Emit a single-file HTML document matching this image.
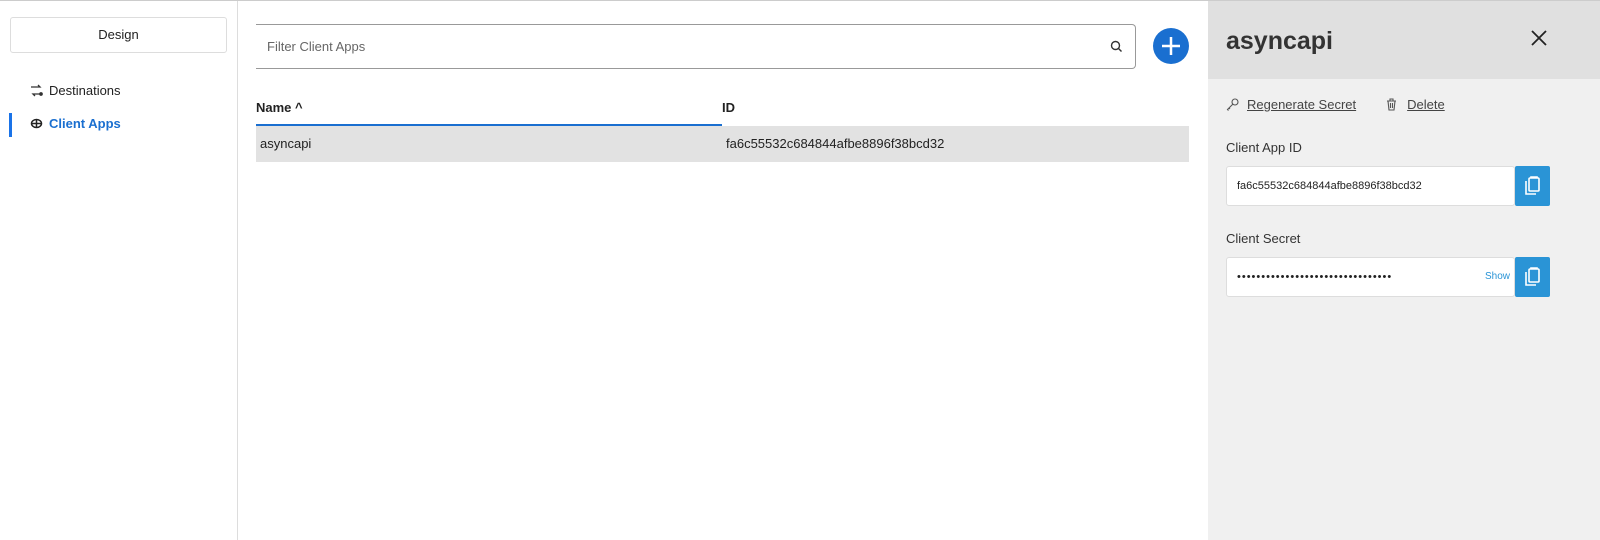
<!DOCTYPE html>
<html><head><style>
*{box-sizing:border-box;margin:0;padding:0}
body{width:1600px;height:540px;overflow:hidden;font-family:"Liberation Sans",sans-serif;background:#fff;position:relative;color:#222}
.top{position:absolute;left:0;top:0;width:1600px;height:1px;background:#ccc}
.side{position:absolute;left:0;top:1px;width:238px;height:539px;border-right:1px solid #ddd}
.design{position:absolute;left:10px;top:16px;width:217px;height:36px;border:1px solid #ddd;border-radius:3px;font-size:13px;text-align:center;line-height:34px}
.nav{position:absolute;left:30px;font-size:13px;display:flex;align-items:center;gap:6px}
.bar{position:absolute;left:9px;top:112px;width:3px;height:24px;background:#1a73e8}
.search{position:absolute;left:256px;top:24px;width:880px;height:45px;border:1px solid #999;border-left:none;border-radius:0 4px 4px 0;font-size:13px;color:#666;padding-left:11px;line-height:43px}
.plus{position:absolute;left:1153px;top:28px;width:36px;height:36px;border-radius:50%;background:#1a6fd0}
.th{position:absolute;top:100px;font-size:13px;font-weight:bold}
.ul{position:absolute;left:256px;top:124px;width:466px;height:2px;background:#1a6fd0}
.row{position:absolute;left:256px;top:126px;width:933px;height:36px;background:#e2e2e2;font-size:13px;line-height:36px}
.panel{position:absolute;left:1208px;top:1px;width:392px;height:539px;background:#f0f0f0}
.ph{height:78px;background:#e0e0e0;position:relative}
.ph h1{position:absolute;left:18px;top:26px;font-size:25px;font-weight:bold;color:#333}
.lbl{position:absolute;left:18px;font-size:13px;color:#333}
.inp{position:absolute;left:18px;width:289px;height:40px;background:#fff;border:1px solid #ddd;border-radius:3px;font-size:11px;padding-left:10px;line-height:38px;color:#222}
.cp{position:absolute;left:307px;width:35px;height:40px;background:#2a94d6;border-radius:2px}
a{color:#444;text-decoration:underline;font-size:13px}
</style></head><body>
<div class="top"></div>
<div class="side">
<div class="design">Design</div>
<div class="nav" style="top:82px"><svg width="13" height="13" viewBox="0 0 13 13" fill="none" stroke="#333" stroke-width="1.3"><path d="M1 3h9l-2-2M12 10H3l2 2"/><circle cx="11" cy="10" r="1.2" fill="#333"/></svg><span>Destinations</span></div>
<div class="bar"></div>
<div class="nav" style="top:115px;color:#1a6fd0;font-weight:bold"><svg width="13" height="13" viewBox="0 0 13 13" fill="none" stroke="#222" stroke-width="1.5"><ellipse cx="6.5" cy="6.5" rx="5" ry="4"/><path d="M1.5 6.5h10M6.5 2.5v8"/></svg><span>Client Apps</span></div>
</div>
<div class="search">Filter Client Apps
<svg style="position:absolute;right:12px;top:15px" width="13" height="13" viewBox="0 0 13 13" fill="none" stroke="#333" stroke-width="1.4"><circle cx="5.5" cy="5.5" r="4"/><path d="M8.5 8.5l3 3"/></svg></div>
<div class="plus"><svg width="36" height="36" viewBox="0 0 36 36" stroke="#fff" stroke-width="2.5"><path d="M18 9v18M9 18h18"/></svg></div>
<div class="th" style="left:256px">Name ^</div>
<div class="th" style="left:722px">ID</div>
<div class="ul"></div>
<div class="row"><span style="position:absolute;left:4px">asyncapi</span><span style="position:absolute;left:470px">fa6c55532c684844afbe8896f38bcd32</span></div>
<div class="panel">
<div class="ph"><h1>asyncapi</h1><svg style="position:absolute;left:322px;top:28px" width="18" height="18" viewBox="0 0 18 18" stroke="#222" stroke-width="1.8"><path d="M2 2l14 14M16 2L2 16"/></svg></div>
<div style="position:absolute;left:18px;top:96px;display:flex;align-items:center">
<svg width="13" height="13" viewBox="0 0 13 13" fill="none" stroke="#555" stroke-width="1.1"><circle cx="9" cy="4" r="3"/><path d="M7 6L1.5 11.5l1 1M3 10l1 1"/></svg>
<a style="margin-left:8px">Regenerate Secret</a>
<svg style="margin-left:30px" width="11" height="13" viewBox="0 0 11 13" fill="none" stroke="#555" stroke-width="1.1"><path d="M1 3h9M4 3V1h3v2M2 3l1 9h5l1-9M4.5 5v5M6.5 5v5"/></svg>
<a style="margin-left:10px">Delete</a></div>
<div class="lbl" style="top:139px">Client App ID</div>
<div class="inp" style="top:165px">fa6c55532c684844afbe8896f38bcd32</div>
<div class="cp" style="top:165px"><svg width="35" height="40" viewBox="0 0 35 40" fill="none" stroke="#fff" stroke-width="1.6"><rect x="14" y="12" width="10" height="13" rx="1"/><path d="M11 15v13h10"/><path d="M16 12v-1h6v1"/></svg></div>
<div class="lbl" style="top:230px">Client Secret</div>
<div class="inp" style="top:256px;letter-spacing:1px">••••••••••••••••••••••••••••••••<span style="position:absolute;right:4px;color:#2a94d6;font-size:10px;letter-spacing:0">Show</span></div>
<div class="cp" style="top:256px"><svg width="35" height="40" viewBox="0 0 35 40" fill="none" stroke="#fff" stroke-width="1.6"><rect x="14" y="12" width="10" height="13" rx="1"/><path d="M11 15v13h10"/><path d="M16 12v-1h6v1"/></svg></div>
</div>
</body></html>
